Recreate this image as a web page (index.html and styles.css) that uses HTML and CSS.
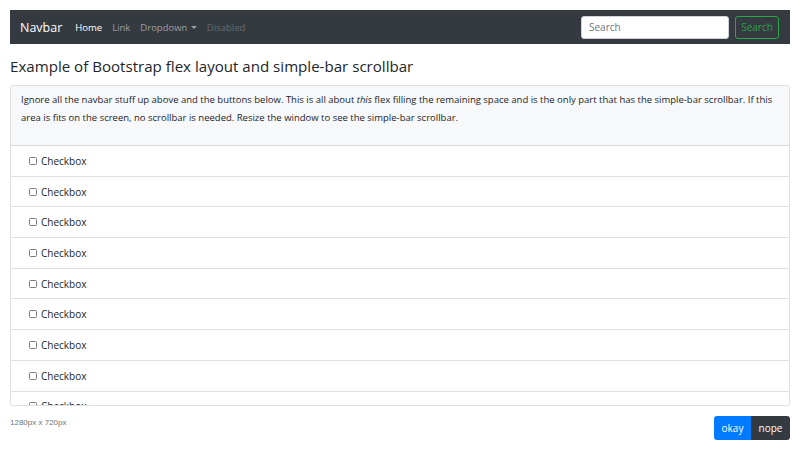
FILE: index.html
```html
<!DOCTYPE html>
<html>
<head>
<meta charset="utf-8">
<link rel="stylesheet" href="styles.css">
</head>
<body>
<div class="page">
  <nav class="navbar">
    <span class="brand">Navbar</span>
    <ul class="nav">
      <li class="active">Home</li>
      <li>Link</li>
      <li class="dropdown">Dropdown <span class="caret"></span></li>
      <li class="disabled">Disabled</li>
    </ul>
    <form class="search">
      <input class="search-input" type="text" placeholder="Search">
      <button class="search-btn" type="button">Search</button>
    </form>
  </nav>
  <h1 class="title">Example of Bootstrap flex layout and simple-bar scrollbar</h1>
  <div class="card">
    <div class="card-header">
      <p>Ignore all the navbar stuff up above and the buttons below. This is all about <em>this</em> flex filling the remaining space and is the only part that has the simple-bar scrollbar. If this area is fits on the screen, no scrollbar is needed. Resize the window to see the simple-bar scrollbar.</p>
    </div>
    <ul class="list">
      <li><label><span class="box"></span>Checkbox</label></li>
      <li><label><span class="box"></span>Checkbox</label></li>
      <li><label><span class="box"></span>Checkbox</label></li>
      <li><label><span class="box"></span>Checkbox</label></li>
      <li><label><span class="box"></span>Checkbox</label></li>
      <li><label><span class="box"></span>Checkbox</label></li>
      <li><label><span class="box"></span>Checkbox</label></li>
      <li><label><span class="box"></span>Checkbox</label></li>
      <li><label><span class="box"></span>Checkbox</label></li>
      <li><label><span class="box"></span>Checkbox</label></li>
    </ul>
  </div>
  <footer class="footer">
    <small class="size">1280px x 720px</small>
    <div class="btn-group">
      <button class="btn btn-primary" type="button">okay</button>
      <button class="btn btn-dark" type="button">nope</button>
    </div>
  </footer>
</div>
</body>
</html>
```
FILE: styles.css
```css
* { box-sizing: border-box; }
html, body { margin: 0; padding: 0; }
body {
  font-family: "Open Sans", "Noto Sans", sans-serif;
  color: #212529;
  background: #fff;
  font-size: 10px;
}
.page {
  height: 450px;
  padding: 10px;
  display: flex;
  flex-direction: column;
}
.navbar {
  height: 34px;
  background: #343a40;
  display: flex;
  align-items: center;
  padding: 0 10px;
  flex-shrink: 0;
}
.brand {
  color: #fff;
  font-size: 12.5px;
  margin-right: 8px;
}
.nav {
  list-style: none;
  margin: 0;
  padding: 0;
  display: flex;
  font-size: 9.5px;
}
.nav li {
  color: rgba(255,255,255,.5);
  padding: 0 5px;
}
.nav li.active { color: #fff; }
.nav li.disabled { color: rgba(255,255,255,.25); }
.caret {
  display: inline-block;
  width: 0; height: 0;
  border-left: 3px solid transparent;
  border-right: 3px solid transparent;
  border-top: 3px solid rgba(255,255,255,.5);
  vertical-align: 2px;
  margin-left: 1px;
}
.search {
  margin-left: auto;
  display: flex;
  gap: 6px;
  margin-right: 1px;
}
.search-input {
  width: 148px;
  height: 23px;
  border: 1px solid #ced4da;
  border-radius: 3px;
  padding: 0 7px;
  font: 10px "Open Sans", sans-serif;
  color: #495057;
  background: #fff;
}
.search-input::placeholder { color: #6c757d; }
.search-btn {
  height: 23px;
  width: 44px;
  padding: 0;
  background: transparent;
  border: 1px solid #28a745;
  border-radius: 3px;
  color: #28a745;
  font: 10px "Open Sans", sans-serif;
}
.title {
  font-weight: 400;
  font-size: 15.1px;
  margin: 13px 0 9px;
  line-height: 19px;
}
.card {
  flex: 1;
  min-height: 0;
  border: 1px solid rgba(0,0,0,.125);
  border-radius: 3px;
  display: flex;
  flex-direction: column;
  overflow: hidden;
}
.card-header {
  background: #f7f8f9;
  border-bottom: 1px solid rgba(0,0,0,.125);
  padding: 5px 10px 0;
  height: 60px;
  flex-shrink: 0;
}
.card-header p {
  margin: 0;
  line-height: 18px;
  font-size: 9.5px;
}
.list {
  list-style: none;
  margin: 0;
  padding: 0;
  overflow: hidden;
}
.list li {
  height: 30.7px;
  border-bottom: 1px solid rgba(0,0,0,.125);
  display: flex;
  align-items: center;
  padding-left: 18px;
}
.list label {
  display: flex;
  align-items: center;
}
.box {
  width: 8px;
  height: 8px;
  border: 1px solid #7a7a7a;
  border-radius: 1.5px;
  margin-right: 4px;
  background: #fff;
}
.footer {
  display: flex;
  justify-content: space-between;
  align-items: flex-start;
  padding-top: 10px;
  flex-shrink: 0;
}
.size {
  font-family: "Liberation Sans", Arial, sans-serif;
  font-size: 8px;
  color: #6c757d;
  margin-top: 2px;
}
.btn-group { display: flex; }
.btn {
  height: 24px;
  border: 0;
  font: 10px "Open Sans", sans-serif;
  color: #fff;
  padding: 0;
}
.btn-primary {
  background: #007bff;
  width: 37px;
  border-radius: 3px 0 0 3px;
}
.btn-dark {
  background: #343a40;
  width: 39px;
  border-radius: 0 3px 3px 0;
}
```
